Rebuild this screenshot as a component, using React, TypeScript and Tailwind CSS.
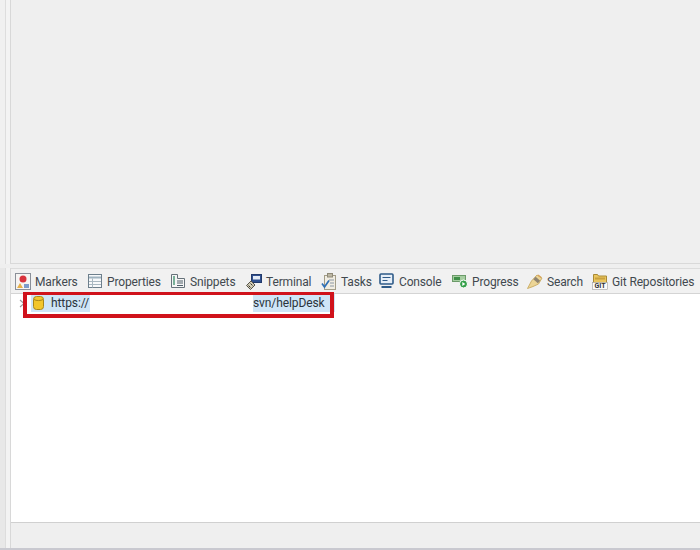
import React from "react";

const font = { fontFamily: 'Roboto, "Noto Sans", sans-serif' };

function MarkersIcon() {
  return (
    <svg width="16" height="17" viewBox="0 0 16 17">
      <rect x="0.5" y="0.5" width="15" height="16" fill="#f6f4f2" stroke="#8a8f98" />
      <circle cx="8" cy="6" r="3.5" fill="#d8323c" />
      <path d="M2 15l3-5 3 5z" fill="#e8b04a" />
      <rect x="9" y="11" width="5" height="4" fill="#7c9ccb" />
    </svg>
  );
}

function PropertiesIcon() {
  return (
    <svg width="16" height="16" viewBox="0 0 16 16" fill="none">
      <rect x="1.5" y="1.5" width="13" height="13" fill="#f7f9fb" stroke="#6d7f8c" />
      <path d="M2 4.5h12" stroke="#9fb2bf" strokeWidth="2" />
      <path d="M5.5 5.5v9M2 8.5h12M2 11.5h12" stroke="#a9b8c2" />
    </svg>
  );
}

function SnippetsIcon() {
  return (
    <svg width="16" height="16" viewBox="0 0 16 16" fill="none">
      <path d="M1.5 1.5h6v4h7v9h-13z" fill="#f5f5f5" stroke="#66727a" />
      <path d="M7 8h6M7 10h6M7 12.5h6" stroke="#50606b" />
      <path d="M4 3v9" stroke="#4f9a7a" strokeWidth="1.5" />
    </svg>
  );
}

function TerminalIcon() {
  return (
    <svg width="16" height="17" viewBox="0 0 16 17" fill="none">
      <rect x="5.5" y="1.5" width="10" height="8" fill="#2f4f8f" stroke="#223a6b" />
      <rect x="7" y="3" width="7" height="3.5" fill="#e3ebf6" />
      <path d="M0.5 12.5l4.5-4.5 4 4-4.500 4.500z" fill="#d2ccb3" stroke="#55524a" />
      <path d="M2.5 12.5l2 2M4.5 10.5l2 2" stroke="#333" />
    </svg>
  );
}

function TasksIcon() {
  return (
    <svg width="16" height="17" viewBox="0 0 16 17" fill="none">
      <rect x="3.5" y="2.5" width="11" height="14" fill="#f1ede2" stroke="#a39d88" />
      <rect x="6.5" y="0.5" width="5" height="3.5" fill="#bdb7a4" stroke="#8f8a78" />
      <path d="M8 7h5M9 10h4M9 13h4" stroke="#8d98a6" />
      <path d="M1 10.5l2.5 3.5L8 7.5" stroke="#2f6fb5" strokeWidth="1.7" />
    </svg>
  );
}

function ConsoleIcon() {
  return (
    <svg width="16" height="16" viewBox="0 0 16 16" fill="none">
      <rect x="1" y="1" width="13" height="10" rx="1" fill="#e6eef7" stroke="#2e5a88" strokeWidth="1.6" />
      <path d="M3.5 4.5h8M3.5 7.5h5" stroke="#2e5a88" />
      <path d="M2.5 14h10" stroke="#2e5a88" strokeWidth="2" />
    </svg>
  );
}

function ProgressIcon() {
  return (
    <svg width="16" height="16" viewBox="0 0 16 16" fill="none">
      <rect x="0.5" y="2.5" width="13" height="6" fill="#a5cda0" stroke="#6b9a69" />
      <rect x="2" y="4" width="6" height="3" fill="#3f8f48" />
      <circle cx="11.5" cy="11" r="4" fill="#35a04a" stroke="#fff" />
      <path d="M10.300 9l3 2-3 2z" fill="#fff" />
    </svg>
  );
}

function SearchIcon() {
  return (
    <svg width="16" height="16" viewBox="0 0 16 16" fill="none">
      <path d="M0.5 15.5l4-7.500 5.500-6 5 3-3.500 6-5.500 2.500z" fill="#ecd596" stroke="#cdb06a" />
      <path d="M7.5 5l4.500 4" stroke="#8f8471" strokeWidth="3.5" />
      <path d="M11 2l3 2.500" stroke="#d9a25a" strokeWidth="1.5" />
    </svg>
  );
}

function GitIcon() {
  return (
    <div className="relative h-[18px] w-[16px]">
      <svg width="16" height="18" viewBox="0 0 16 18" fill="none">
        <path d="M1.5 12V2.500h4l1 1.500h8v8z" fill="#eac65f" stroke="#a98a35" />
        <path d="M3 6.5h10" stroke="#c9a13f" strokeWidth="2" />
        <rect x="0.5" y="10.5" width="15" height="7" fill="#fbfbfb" stroke="#a0a0a0" strokeWidth="0.6" />
      </svg>
      <span className="absolute left-0 top-[10px] w-full text-center text-[7px] font-bold leading-[8px] text-[#333333]">
        GIT
      </span>
    </div>
  );
}

function Tab({ icon, label, width }: { icon: React.ReactNode; label: string; width: string }) {
  return (
    <div className={`flex shrink-0 items-center gap-[4px] ${width}`}>
      {icon}
      <span className="mt-[1px] whitespace-nowrap text-[12px] leading-none tracking-[-0.15px] text-[#42494f]">{label}</span>
    </div>
  );
}

export default function App() {
  return (
    <div className="relative flex h-[550px] w-[700px] flex-col overflow-hidden bg-[#efefef]" style={font}>
      {/* Top editor area */}
      <div className="flex h-[264px]">
        <div className="w-[6px] border-r border-[#dddddd] bg-[#f0f0f0]" />
        <div className="w-[5px] border-r border-[#d8d8d8] bg-[#f3f3f3]" />
        <div className="flex-1 border-b border-[#d9d9d9] bg-[#efefef]" />
      </div>

      {/* Bottom views */}
      <div className="mt-[4px] flex flex-1">
        <div className="w-[6px] border-r border-[#dddddd] bg-[#e8e8e8]" />
        <div className="w-[5px] border-r border-[#d8d8d8] bg-[#f3f3f3]" />
        <div className="flex flex-1 flex-col border-t border-[#dcdcdc]">
          <div className="flex h-[25px] items-center border-b border-[#d4d4d4] bg-[#f1f1f1] pl-[4px]">
            <Tab icon={<MarkersIcon />} label="Markers" width="w-[72px]" />
            <Tab icon={<PropertiesIcon />} label="Properties" width="w-[83px]" />
            <Tab icon={<SnippetsIcon />} label="Snippets" width="w-[76px]" />
            <Tab icon={<TerminalIcon />} label="Terminal" width="w-[75px]" />
            <Tab icon={<TasksIcon />} label="Tasks" width="w-[58px]" />
            <Tab icon={<ConsoleIcon />} label="Console" width="w-[73px]" />
            <Tab icon={<ProgressIcon />} label="Progress" width="w-[75px]" />
            <Tab icon={<SearchIcon />} label="Search" width="w-[65px]" />
            <Tab icon={<GitIcon />} label="Git Repositories" width="w-[108px]" />
          </div>

          <div className="h-[228px] bg-white pl-[6px]">
            <div className="flex h-[18px] items-center">
              <svg width="12" height="12" viewBox="0 0 12 12" fill="none" className="shrink-0">
                <path d="M3 3l4 3.5L3 10" stroke="#9a9a9a" strokeWidth="1.1" />
              </svg>
              <div className="ml-[2px] flex h-[18px] w-[304px] items-center bg-[#cfe5f7] pl-[1px]">
                <svg width="14" height="16" viewBox="0 0 14 16" fill="none" className="mr-[5px] shrink-0">
                  <rect x="1.5" y="1.5" width="10" height="13" rx="3" fill="#f2c62c" stroke="#a8861a" />
                  <path d="M2 4.5c2 1.4 7 1.4 9 0" stroke="#a8861a" />
                </svg>
                <span className="w-[39px] whitespace-nowrap text-[12px] leading-none tracking-[-0.1px] text-[#2a343c]">https://</span>
                <div className="h-full w-[163px] bg-white" />
                <span className="whitespace-nowrap text-[12px] leading-none tracking-[-0.1px] text-[#2a343c]">svn/helpDesk</span>
              </div>
            </div>
          </div>

          <div className="flex-1 border-t border-[#d0d0d0]" />
        </div>
      </div>

      {/* Bottom status bar edge */}
      <div className="h-[2px] bg-[#c9c9d0]" />

      {/* Red highlight drawn over the row */}
      <div className="absolute left-[23px] top-[292px] h-[26px] w-[311px] border-x-4 border-b-4 border-t-[3px] border-[#d0121b]" />
    </div>
  );
}
